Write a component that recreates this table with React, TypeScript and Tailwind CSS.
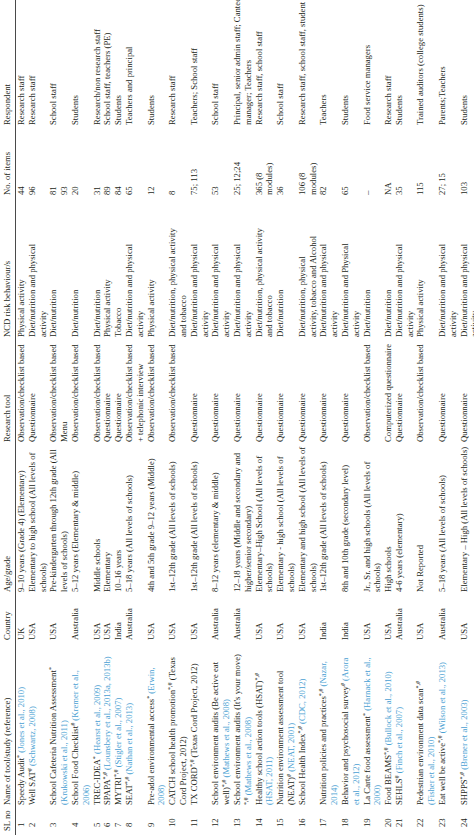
import React from "react";

type Line = React.ReactNode;

type Row = {
  n: number;
  name: Line[];
  country: string;
  age: string[];
  tool: string[];
  ncd: string[];
  items: string[];
  resp: string[];
};

const Ref = ({ children }: { children: React.ReactNode }) => (
  <span className="text-[#4a9fd3]">{children}</span>
);

const Sup = ({ children }: { children: React.ReactNode }) => (
  <sup className="text-[6px]">{children}</sup>
);

const DNPA = ["Diet/nutrition and physical", "activity"];
const DPAT = ["Diet/nutrition, physical activity", "and tobacco"];

const rows: Row[] = [
  {
    n: 1,
    name: [<>Speedy Audit<Sup>*</Sup> <Ref>(Jones et al., 2010)</Ref></>],
    country: "UK",
    age: ["9–10 years (Grade 4) (Elementary)"],
    tool: ["Observation/checklist based"],
    ncd: ["Physical activity"],
    items: ["44"],
    resp: ["Research staff"],
  },
  {
    n: 2,
    name: [<>Well SAT<Sup>#</Sup> <Ref>(Schwartz, 2008)</Ref></>],
    country: "USA",
    age: ["Elementary to high school (All levels of", "schools)"],
    tool: ["Questionnaire"],
    ncd: DNPA,
    items: ["96"],
    resp: ["Research staff"],
  },
  {
    n: 3,
    name: [
      <>School Cafeteria Nutrition Assessment<Sup>*</Sup></>,
      <Ref>(Krukowski et al., 2011)</Ref>,
    ],
    country: "USA",
    age: ["Pre-kindergarten through 12th grade (All", "levels of schools)"],
    tool: ["Observation/checklist based", "Menu"],
    ncd: ["Diet/nutrition"],
    items: ["81", "93"],
    resp: ["School staff"],
  },
  {
    n: 4,
    name: [
      <>School Food Checklist<Sup>#</Sup> <Ref>(Kremer et al.,</Ref></>,
      <Ref>2006)</Ref>,
    ],
    country: "Australia",
    age: ["5–12 years (Elementary & middle)"],
    tool: ["Observation/checklist based"],
    ncd: ["Diet/nutrition"],
    items: ["20"],
    resp: ["Students"],
  },
  {
    n: 5,
    name: [<>TREC-IDEA<Sup>*</Sup> <Ref>(Hearst et al., 2009)</Ref></>],
    country: "USA",
    age: ["Middle schools"],
    tool: ["Observation/checklist based"],
    ncd: ["Diet/nutrition"],
    items: ["31"],
    resp: ["Research/non research staff"],
  },
  {
    n: 6,
    name: [<>SPAPA<Sup>*,#</Sup> <Ref>(Lounsbery et al., 2013a, 2013b)</Ref></>],
    country: "USA",
    age: ["Elementary"],
    tool: ["Questionnaire"],
    ncd: ["Physical activity"],
    items: ["89"],
    resp: ["School staff, teachers (PE)"],
  },
  {
    n: 7,
    name: [<>MYTRI<Sup>*,#</Sup> <Ref>(Stigler et al., 2007)</Ref></>],
    country: "India",
    age: ["10–16 years"],
    tool: ["Questionnaire"],
    ncd: ["Tobacco"],
    items: ["84"],
    resp: ["Students"],
  },
  {
    n: 8,
    name: [<>SEAT<Sup>*,#</Sup> <Ref>(Nathan et al., 2013)</Ref></>],
    country: "Australia",
    age: ["5–18 years (All levels of schools)"],
    tool: ["Observation/checklist based", "+ telephonic interview"],
    ncd: DNPA,
    items: ["65"],
    resp: ["Teachers and principal"],
  },
  {
    n: 9,
    name: [
      <>Pre-adol environmental access<Sup>*</Sup> <Ref>(Erwin,</Ref></>,
      <Ref>2008)</Ref>,
    ],
    country: "USA",
    age: ["4th and 5th grade 9–12 years (Middle)"],
    tool: ["Observation/checklist based"],
    ncd: ["Physical activity"],
    items: ["12"],
    resp: ["Students"],
  },
  {
    n: 10,
    name: [<>CATCH school health promotion<Sup>*,#</Sup> (Texas</>, "Cord Project, 2012)"],
    country: "USA",
    age: ["1st–12th grade (All levels of schools)"],
    tool: ["Observation/checklist based"],
    ncd: DPAT,
    items: ["8"],
    resp: ["Research staff"],
  },
  {
    n: 11,
    name: [<>TX CORD<Sup>*,#</Sup> (Texas Cord Project, 2012)</>],
    country: "USA",
    age: ["1st–12th grade (All levels of schools)"],
    tool: ["Questionnaire"],
    ncd: DNPA,
    items: ["75; 113"],
    resp: ["Teachers; School staff"],
  },
  {
    n: 12,
    name: [
      "School environment audits (Be active eat",
      <>well)<Sup>*,#</Sup> <Ref>(Mathews et al., 2008)</Ref></>,
    ],
    country: "Australia",
    age: ["8–12 years (elementary & middle)"],
    tool: ["Questionnaire"],
    ncd: DNPA,
    items: ["53"],
    resp: ["School staff"],
  },
  {
    n: 13,
    name: [
      "School environment audits (It's your move)",
      <><Sup>*,#</Sup> <Ref>(Mathews et al., 2008)</Ref></>,
    ],
    country: "Australia",
    age: ["12–18 years (Middle and secondary and", "higher/senior secondary)"],
    tool: ["Questionnaire"],
    ncd: DNPA,
    items: ["25; 12;24"],
    resp: ["Principal, senior admin staff; Canteen", "manager; Teachers"],
  },
  {
    n: 14,
    name: [
      <>Healthy school action tools (HSAT)<Sup>*,#</Sup></>,
      <Ref>(HSAT, 2011)</Ref>,
    ],
    country: "USA",
    age: ["Elementary–High School (All levels of", "schools)"],
    tool: ["Questionnaire"],
    ncd: DPAT,
    items: ["365 (8", "modules)"],
    resp: ["Research staff, school staff"],
  },
  {
    n: 15,
    name: [
      "Nutrition environment assessment tool",
      <>(NEAT)<Sup>#</Sup> <Ref>(NEAT, 2001)</Ref></>,
    ],
    country: "USA",
    age: ["Elementary - high school (All levels of", "schools)"],
    tool: ["Questionnaire"],
    ncd: ["Diet/nutrition"],
    items: ["36"],
    resp: ["School staff"],
  },
  {
    n: 16,
    name: [<>School Health Index<Sup>*,#</Sup> <Ref>(CDC, 2012)</Ref></>],
    country: "USA",
    age: ["Elementary and high school (All levels of", "schools)"],
    tool: ["Questionnaire"],
    ncd: ["Diet/nutrition, physical", "activity, tobacco and Alcohol"],
    items: ["106 (8", "modules)"],
    resp: ["Research staff, school staff, student"],
  },
  {
    n: 17,
    name: [
      <>Nutrition policies and practices<Sup>*,#</Sup> <Ref>(Nazar,</Ref></>,
      <Ref>2014)</Ref>,
    ],
    country: "India",
    age: ["1st–12th grade (All levels of schools)"],
    tool: ["Questionnaire"],
    ncd: DNPA,
    items: ["82"],
    resp: ["Teachers"],
  },
  {
    n: 18,
    name: [
      <>Behavior and psychosocial survey<Sup>#</Sup> <Ref>(Arora</Ref></>,
      <Ref>et al., 2012)</Ref>,
    ],
    country: "India",
    age: ["8th and 10th grade (secondary level)"],
    tool: ["Questionnaire"],
    ncd: ["Diet/nutrition and Physical", "activity"],
    items: ["65"],
    resp: ["Students"],
  },
  {
    n: 19,
    name: [
      <>La Carte food assessment<Sup>*</Sup> <Ref>(Harnack et al.,</Ref></>,
      <Ref>2000)</Ref>,
    ],
    country: "USA",
    age: ["Jr., Sr. and high schools (All levels of", "schools)"],
    tool: ["Observation/checklist based"],
    ncd: ["Diet/nutrition"],
    items: ["–"],
    resp: ["Food service managers"],
  },
  {
    n: 20,
    name: [<>Food BEAMS<Sup>*,#</Sup> <Ref>(Bullock et al., 2010)</Ref></>],
    country: "USA",
    age: ["High schools"],
    tool: ["Computerized questionnaire"],
    ncd: ["Diet/nutrition"],
    items: ["NA"],
    resp: ["Research staff"],
  },
  {
    n: 21,
    name: [<>SEHLS<Sup>#</Sup> <Ref>(Finch et al., 2007)</Ref></>],
    country: "Australia",
    age: ["4-6 years (elementary)"],
    tool: ["Questionnaire"],
    ncd: DNPA,
    items: ["35"],
    resp: ["Students"],
  },
  {
    n: 22,
    name: [
      <>Pedestrian environment data scan<Sup>*,#</Sup></>,
      <Ref>(Fisher et al., 2010)</Ref>,
    ],
    country: "USA",
    age: ["Not Reported"],
    tool: ["Observation/checklist based"],
    ncd: ["Physical activity"],
    items: ["115"],
    resp: ["Trained auditors (college students)"],
  },
  {
    n: 23,
    name: [<>Eat well be active<Sup>*,#</Sup> <Ref>(Wilson et al., 2013)</Ref></>],
    country: "Australia",
    age: ["5–18 years (All levels of schools)"],
    tool: ["Questionnaire"],
    ncd: DNPA,
    items: ["27; 15"],
    resp: ["Parents;Teachers"],
  },
  {
    n: 24,
    name: [<>SHPPS<Sup>*,#</Sup> <Ref>(Brener et al., 2003)</Ref></>],
    country: "USA",
    age: ["Elementary – High (All levels of schools)"],
    tool: ["Questionnaire"],
    ncd: DNPA,
    items: ["103"],
    resp: ["Students"],
  },
];

// the printed table is laid out normally, then turned on its side
const cols = "grid grid-cols-[30px_165px_48px_150px_105px_142px_70px_125px]";

const Cell = ({ lines }: { lines: Line[] }) => (
  <div className="whitespace-nowrap">
    {lines.map((l, i) => (
      <div key={i}>{l}</div>
    ))}
  </div>
);

const App = () => {
  return (
    <div className="w-[474px] h-[835px] overflow-hidden bg-white">
      <div className="w-[835px] h-[474px] origin-top-left [transform:translateY(835px)_rotate(-90deg)] font-['Liberation_Serif',serif] text-[8.7px] leading-[10.8px] text-[#231f20]">
        <div className={`${cols} h-[16px] items-center border-b border-[#4a4a4a]`}>
          <div className="pl-[4px] whitespace-nowrap">SL no</div>
          <div className="whitespace-nowrap">Name of tool/study (reference)</div>
          <div>Country</div>
          <div>Age/grade</div>
          <div>Research tool</div>
          <div>NCD risk behaviour/s</div>
          <div className="whitespace-nowrap">No. of items</div>
          <div>Respondent</div>
        </div>
        {rows.map((r) => (
          <div key={r.n} className={cols}>
            <div className="pl-[8px]">{r.n}</div>
            <Cell lines={r.name} />
            <div>{r.country}</div>
            <Cell lines={r.age} />
            <Cell lines={r.tool} />
            <Cell lines={r.ncd} />
            <Cell lines={r.items} />
            <Cell lines={r.resp} />
          </div>
        ))}
      </div>
    </div>
  );
};

export default App;
